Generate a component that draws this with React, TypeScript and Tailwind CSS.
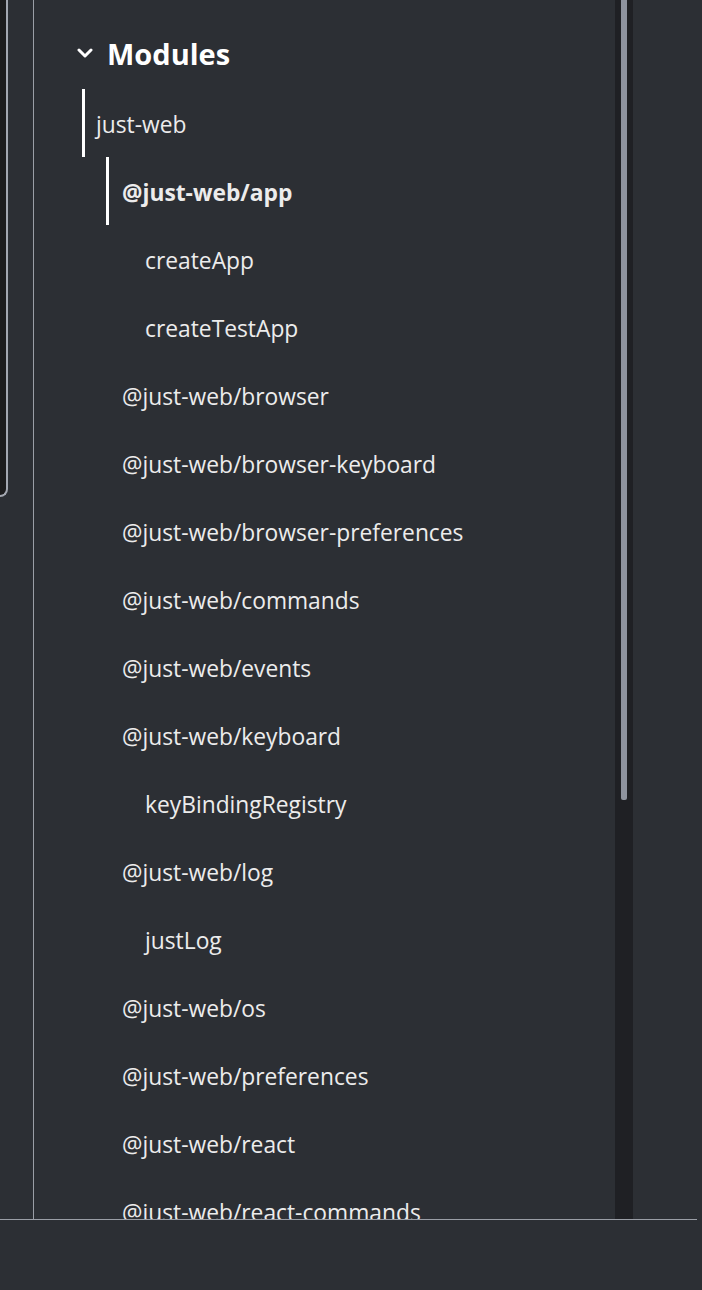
import React from "react";

type Item = { label: string; level: 0 | 1 | 2; active?: boolean };

const items: Item[] = [
  { label: "just-web", level: 0, active: true },
  { label: "@just-web/app", level: 1, active: true },
  { label: "createApp", level: 2 },
  { label: "createTestApp", level: 2 },
  { label: "@just-web/browser", level: 1 },
  { label: "@just-web/browser-keyboard", level: 1 },
  { label: "@just-web/browser-preferences", level: 1 },
  { label: "@just-web/commands", level: 1 },
  { label: "@just-web/events", level: 1 },
  { label: "@just-web/keyboard", level: 1 },
  { label: "keyBindingRegistry", level: 2 },
  { label: "@just-web/log", level: 1 },
  { label: "justLog", level: 2 },
  { label: "@just-web/os", level: 1 },
  { label: "@just-web/preferences", level: 1 },
  { label: "@just-web/react", level: 1 },
  { label: "@just-web/react-commands", level: 1 },
];

const indent = {
  0: "ml-[48px] pl-[11px]",
  1: "ml-[72px] pl-[13px]",
  2: "ml-[96px] pl-[12px]",
};

function Row({ item }: { item: Item }) {
  return (
    <div
      className={`flex h-[68px] shrink-0 items-center border-l-[3px] pt-[4px] ${indent[item.level]} ${
        item.active ? "border-white" : "border-transparent"
      } ${item.active && item.level === 1 ? "font-bold" : "font-normal"}`}
    >
      <span className="whitespace-nowrap">{item.label}</span>
    </div>
  );
}

export default function App() {
  return (
    <div
      className="flex h-[1290px] w-[702px] flex-col overflow-hidden bg-[#2c2f34] text-[#ececec]"
      style={{ fontFamily: '"Open Sans", "Noto Sans", sans-serif' }}
    >
      <div className="flex h-[1220px] w-[697px] shrink-0 border-b border-[#9a9ea6]">
        {/* left gutter */}
        <div className="w-[34px] shrink-0 border-r border-[#9a9ea6]">
          <div className="h-[497px] w-[8px] rounded-br-[10px] border-r-2 border-b-2 border-[#a3a7b0] bg-[#1c1c1d]" />
        </div>

        {/* tree */}
        <div className="flex-1 overflow-hidden text-[22.8px] leading-none">
          <div className="mt-[19px] flex h-[68px] items-center pl-[43px]">
            <svg width="16" height="10" viewBox="0 0 16 10" className="mr-[14px]">
              <path d="M2 2l6 6 6-6" fill="none" stroke="#ffffff" strokeWidth="3" strokeLinecap="round" strokeLinejoin="round" />
            </svg>
            <span className="text-[29px] font-bold text-white">Modules</span>
          </div>
          <div className="flex flex-col pt-[2px]">
            {items.map((it) => (
              <Row key={it.label} item={it} />
            ))}
          </div>
        </div>

        {/* scrollbar */}
        <div className="flex w-[18px] shrink-0 justify-center bg-[#1f2024]">
          <div className="h-[800px] w-[6px] rounded-b-[2px] bg-[#8e939e]" />
        </div>

        <div className="w-[64px] shrink-0" />
      </div>
    </div>
  );
}
